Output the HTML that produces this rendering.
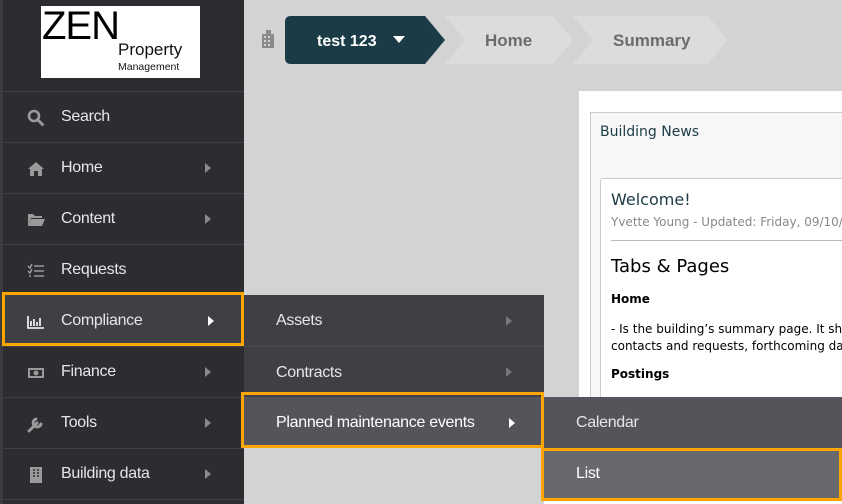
<!DOCTYPE html>
<html><head><style>
*{margin:0;padding:0;box-sizing:border-box}
html,body{width:842px;height:504px;overflow:hidden}
body{background:#d3d3d3;font-family:"Liberation Sans",sans-serif;position:relative}
.abs{position:absolute}
#side{left:0;top:0;width:244px;height:504px;background:#2d2c31;border-left:3px solid #3c3b40}
.logo{left:41px;top:6px;width:159px;height:72px;background:#fff;overflow:hidden}
.it{position:absolute;left:3px;width:241px;height:51px;border-top:1px solid #3f3e44;color:#e6e6e6;font-size:16px;line-height:50px}
.it svg{position:absolute;left:24px;top:17px}
.it .t{position:absolute;left:58px;letter-spacing:-0.3px}
.ar{position:absolute;width:0;height:0;border-top:5px solid transparent;border-bottom:5px solid transparent;border-left:6px solid #8a8a8a}
.sub{position:absolute;height:51px;color:#e6e6e6;font-size:16px;line-height:51px;letter-spacing:-0.3px}
.hl{position:absolute;border:3px solid #ffa500}
.news{font-family:"DejaVu Sans","Liberation Sans",sans-serif;overflow:hidden}
</style></head><body>
<div id="side" class="abs"></div>
<div class="abs logo">
 <div class="abs" style="left:1px;top:-2px;font-size:40px;line-height:44px;color:#000;letter-spacing:-1px">ZEN</div>
 <div class="abs" style="left:77px;top:34px;font-size:17px;color:#111">Property</div>
 <div class="abs" style="left:77px;top:55px;font-size:10.5px;color:#111">Management</div>
</div>
<div class="it" style="top:91px"><svg width="18" height="18" viewBox="0 0 18 18"><circle cx="7" cy="7" r="5" fill="none" stroke="#9a9a9a" stroke-width="2.6"/><path d="M10.5 10.5 L15.5 15.5" stroke="#9a9a9a" stroke-width="3" stroke-linecap="round"/></svg><span class="t">Search</span></div>
<div class="it" style="top:142px"><svg width="18" height="18" viewBox="0 0 18 18"><path d="M1 9 L9 2 L17 9 L15 9 L15 16 L11 16 L11 11 L7 11 L7 16 L3 16 L3 9Z" fill="#9a9a9a"/></svg><span class="t">Home</span><div class="ar" style="left:202px;top:20px"></div></div>
<div class="it" style="top:193px"><svg width="18" height="18" viewBox="0 0 18 18"><path d="M1 3 H6 L8 5 H15 V7 H4 L1 15Z M4 8 H18 L15 15 H1Z" fill="#9a9a9a"/></svg><span class="t">Content</span><div class="ar" style="left:202px;top:20px"></div></div>
<div class="it" style="top:244px"><svg width="18" height="18" viewBox="0 0 18 18"><path d="M1 4 L3 6 L5 2 M1 9 L3 11 L5 7 M2 14 H4" stroke="#9a9a9a" stroke-width="1.5" fill="none"/><path d="M7 4 H17 M7 9 H17 M7 14 H17" stroke="#9a9a9a" stroke-width="1.6"/></svg><span class="t">Requests</span></div>
<div class="it" style="top:295px;background:#403f45"><svg width="18" height="18" viewBox="0 0 18 18"><path d="M1 3 V15 H17 M4 8 V13 M7 6 V13 M10 9 V13 M13 5 V13" stroke="#fff" stroke-width="1.6" fill="none"/></svg><span class="t">Compliance</span><div class="ar" style="left:205px;top:20px;border-left-color:#fff"></div></div>
<div class="it" style="top:346px"><svg width="18" height="18" viewBox="0 0 18 18"><rect x="1" y="4" width="16" height="10" fill="#9a9a9a"/><rect x="3" y="6" width="12" height="6" fill="#2d2c31"/><circle cx="9" cy="9" r="2.5" fill="#9a9a9a"/></svg><span class="t">Finance</span><div class="ar" style="left:202px;top:20px"></div></div>
<div class="it" style="top:397px"><svg width="18" height="18" viewBox="0 0 18 18"><path d="M2 16 L10 8 M9 4 A4 4 0 1 0 14 9" stroke="#9a9a9a" stroke-width="3" fill="none" stroke-linecap="round"/></svg><span class="t">Tools</span><div class="ar" style="left:202px;top:20px"></div></div>
<div class="it" style="top:448px;height:51px"><svg width="18" height="18" viewBox="0 0 18 18"><rect x="3" y="1" width="12" height="16" fill="#9a9a9a"/><path d="M6 4h2M10 4h2M6 7h2M10 7h2M6 10h2M10 10h2" stroke="#2d2c31" stroke-width="1.5"/></svg><span class="t">Building data</span><div class="ar" style="left:202px;top:20px"></div></div>
<div class="it" style="top:499px;height:5px"></div>

<svg class="abs" style="left:250px;top:10px" width="500" height="60">
 <g fill="#8a8a8a"><rect x="12" y="24" width="12" height="14"/><rect x="16" y="20" width="5" height="4"/></g>
 <g fill="#d3d3d3"><rect x="14" y="26" width="2" height="2"/><rect x="18" y="26" width="2" height="2"/><rect x="14" y="30" width="2" height="2"/><rect x="18" y="30" width="2" height="2"/><rect x="14" y="34" width="2" height="2"/><rect x="18" y="34" width="2" height="2"/></g>
 <path d="M35 12 Q35 6 41 6 H175 L195 30 L175 54 H41 Q35 54 35 48Z" fill="#1b3b47"/>
 <path d="M195 6 H303 L323 30 L303 54 H195 L215 30Z" fill="#dcdcdc"/>
 <path d="M323 6 H458 L478 30 L458 54 H323 L343 30Z" fill="#dcdcdc"/>
 <text x="67" y="36" fill="#fff" font-size="16" font-weight="bold" font-family="Liberation Sans">test 123</text>
 <path d="M143 26 H155 L149 33Z" fill="#fff"/>
 <text x="235" y="36" fill="#6b6b6b" font-size="17" font-weight="bold" font-family="Liberation Sans">Home</text>
 <text x="363" y="36" fill="#6b6b6b" font-size="17" font-weight="bold" font-family="Liberation Sans">Summary</text>
</svg>

<div class="abs" style="left:579px;top:91px;width:263px;height:413px;background:#fff"></div>
<div class="abs news" style="left:590px;top:112px;width:252px;height:392px;background:#f7f7f7;border:1px solid #ccc;border-right:none;border-bottom:none">
 <div class="abs" style="left:9px;top:11px;font-size:14px;color:#1b3b47">Building News</div>
</div>
<div class="abs news" style="left:600px;top:178px;width:242px;height:326px;background:#fff;border:1px solid #ccc;border-right:none;border-bottom:none;border-radius:3px 0 0 0">
 <div class="abs" style="left:10px;top:11px;font-size:16px;color:#1b3b47;white-space:nowrap">Welcome!</div>
 <div class="abs" style="left:10px;top:36px;font-size:12px;color:#888;white-space:nowrap">Yvette Young - Updated: Friday, 09/10/</div>
 <div class="abs" style="left:10px;top:61px;width:240px;border-top:1px solid #bbb"></div>
 <div class="abs" style="left:10px;top:77px;font-size:18px;color:#000;white-space:nowrap">Tabs &amp; Pages</div>
 <div class="abs" style="left:10px;top:113px;font-size:12px;font-weight:bold;color:#000">Home</div>
 <div class="abs" style="left:10px;top:142px;font-size:12px;color:#000;white-space:nowrap;line-height:17px">- Is the building’s summary page. It sho<br>contacts and requests, forthcoming da</div>
 <div class="abs" style="left:10px;top:188px;font-size:12px;font-weight:bold;color:#000">Postings</div>
</div>

<div class="sub" style="left:244px;top:295px;width:300px;background:#403f45"><span class="abs" style="left:32px">Assets</span><div class="ar" style="left:262px;top:21px;border-left-color:#777"></div></div>
<div class="sub" style="left:244px;top:346px;width:300px;background:#403f45;border-top:1px solid #4c4b51"><span class="abs" style="left:32px">Contracts</span><div class="ar" style="left:262px;top:20px;border-left-color:#777"></div></div>
<div class="sub" style="left:244px;top:397px;width:300px;background:#55545a"><span class="abs" style="left:32px;color:#fff">Planned maintenance events</span><div class="ar" style="left:265px;top:21px;border-left-color:#fff"></div></div>
<div class="sub" style="left:544px;top:397px;width:298px;background:#55545a"><span class="abs" style="left:32px">Calendar</span></div>
<div class="sub" style="left:544px;top:448px;width:298px;height:52px;background:#69686d"><span class="abs" style="left:32px;color:#fff">List</span></div>
<div class="abs" style="left:544px;top:500px;width:298px;height:4px;background:#fff"></div>

<div class="hl" style="left:2px;top:292px;width:242px;height:54px"></div>
<div class="hl" style="left:241px;top:392px;width:303px;height:56px"></div>
<div class="hl" style="left:541px;top:448px;width:301px;height:53px"></div>
</body></html>
